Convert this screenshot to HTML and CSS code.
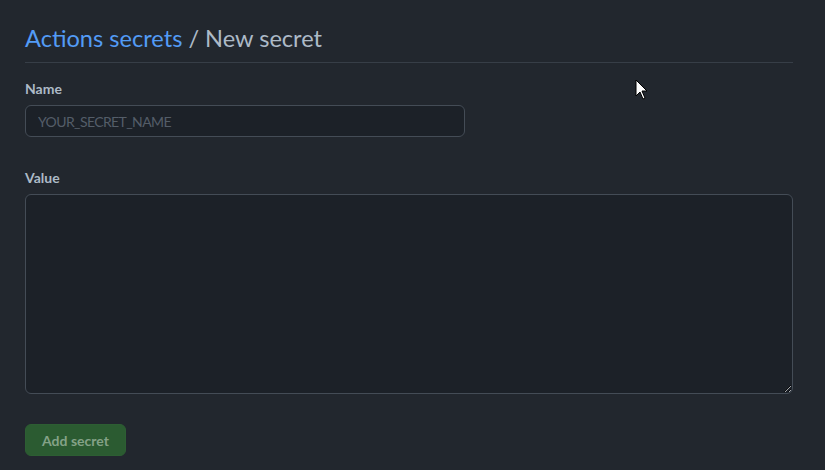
FILE: index.html
```html
<!DOCTYPE html>
<html>
<head>
<meta charset="utf-8">
<link rel="stylesheet" href="styles.css">
</head>
<body>
<div class="page">
  <div class="subhead">
    <h2 class="subhead-heading"><a class="link" href="#">Actions secrets</a> / New secret</h2>
  </div>
  <form class="form">
    <div class="form-group">
      <label class="label" for="name">Name</label>
      <input class="input input-name" id="name" type="text" placeholder="YOUR_SECRET_NAME">
    </div>
    <div class="form-group form-group-value">
      <label class="label" for="value">Value</label>
      <textarea class="input textarea" id="value"></textarea>
    </div>
    <button class="btn-primary" type="button">Add secret</button>
  </form>
</div>
<svg class="cursor" width="14" height="22" viewBox="0 0 14 22">
  <path d="M1 1 L1 17 L5 13 L8 20 L10 19 L7 12 L12 12 Z" fill="#ffffff" stroke="#000000" stroke-width="1"/>
</svg>
</body>
</html>
```
FILE: styles.css
```css
html, body {
  margin: 0;
  padding: 0;
  background: #22272e;
  color: #adbac7;
  font-family: "Lato", "Noto Sans", sans-serif;
  font-size: 14px;
}
.page {
  padding: 20px 32px 0 25px;
}
.subhead {
  border-bottom: 1px solid #373e47;
  padding-bottom: 6px;
  margin-bottom: 16px;
}
.subhead-heading {
  margin: 0;
  font-size: 23.6px;
  font-weight: 400;
  line-height: 36px;
  color: #adbac7;
}
.link {
  color: #539bf5;
  text-decoration: none;
}
.form-group {
  margin-bottom: 31px;
}
.label {
  display: block;
  font-weight: 700;
  font-size: 14px;
  line-height: 20px;
  margin-bottom: 6px;
  color: #adbac7;
}
.input {
  display: block;
  box-sizing: border-box;
  background: #1c2128;
  border: 1px solid #444c56;
  border-radius: 6px;
  color: #adbac7;
  font-family: inherit;
  font-size: 14px;
  padding: 5px 12px;
  outline: none;
}
.input-name {
  width: 440px;
  height: 32px;
}
.input::placeholder {
  color: #545d68;
  letter-spacing: -0.6px;
}
.textarea {
  width: 100%;
  height: 200px;
  resize: vertical;
}
.form-group-value {
  margin-bottom: 30px;
}
.btn-primary {
  display: block;
  width: 101px;
  height: 32px;
  background: #2b5b31;
  border: 1px solid #2d5e33;
  border-radius: 6px;
  color: #84a287;
  font-family: inherit;
  font-weight: 700;
  font-size: 14px;
  padding: 0;
}
.cursor {
  position: absolute;
  left: 635px;
  top: 79px;
}
```
